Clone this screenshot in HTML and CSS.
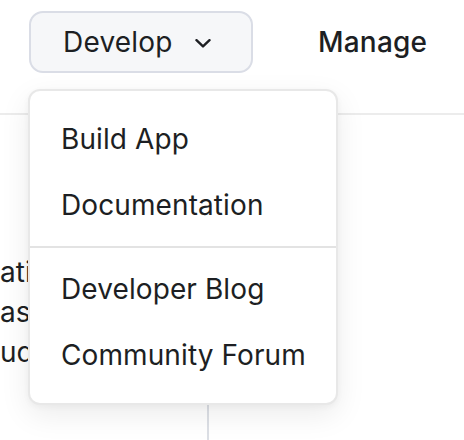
FILE: index.html
```html
<!DOCTYPE html>
<html lang="en">
<head>
<meta charset="utf-8">
<title>Develop menu</title>
<link rel="stylesheet" href="styles.css">
</head>
<body>
<header class="topbar">
  <nav class="nav">
    <div class="nav-item">
      <button class="nav-button is-open" type="button">
        <span>Develop</span>
        <svg class="chevron" width="16" height="9" viewBox="0 0 16 9" aria-hidden="true"><path d="M1.5 1.2 L8 7.4 L14.5 1.2" fill="none" stroke="#1d1f23" stroke-width="2.4" stroke-linecap="round" stroke-linejoin="round"/></svg>
      </button>
      <div class="menu">
        <ul class="menu-group">
          <li class="menu-item">Build App</li>
          <li class="menu-item">Documentation</li>
        </ul>
        <ul class="menu-group">
          <li class="menu-item">Developer Blog</li>
          <li class="menu-item">Community Forum</li>
        </ul>
      </div>
    </div>
    <a class="nav-link" href="#">Manage</a>
  </nav>
</header>
<main class="content">
  <section class="col col-left">
    <p class="copy">ati<br>as<br>ud</p>
  </section>
  <section class="col col-right"></section>
</main>
</body>
</html>
```

FILE: styles.css
```css
* { box-sizing: border-box; }
html, body {
  margin: 0;
  padding: 0;
  background: #ffffff;
  width: 464px;
  height: 440px;
  overflow: hidden;
}
body {
  font-family: "Inter", "Noto Sans", "Liberation Sans", sans-serif;
  color: #1d1f23;
}
.topbar {
  height: 115px;
  border-bottom: 2px solid #ececec;
  padding: 11px 0 0 29px;
}
.nav {
  display: flex;
  align-items: flex-start;
  gap: 65px;
}
.nav-item {
  position: relative;
}
.nav-button {
  display: flex;
  align-items: center;
  gap: 22px;
  height: 62px;
  width: 224px;
  padding: 0 0 0 32px;
  border: 2px solid #dadde6;
  border-radius: 14px;
  background: #f6f7f9;
  font-family: inherit;
  font-size: 28px;
  color: #1d1f23;
  letter-spacing: 0.2px;
  cursor: pointer;
}
.chevron { display: block; margin-top: 2px; }
.nav-link {
  display: block;
  height: 62px;
  line-height: 62px;
  font-size: 28px;
  font-weight: 500;
  color: #1d1f23;
  text-decoration: none;
  letter-spacing: 0.2px;
}
.menu {
  position: absolute;
  top: 78px;
  left: -1px;
  width: 310px;
  background: #ffffff;
  border: 2px solid #e8e8e8;
  border-radius: 12px;
  box-shadow: 0 10px 30px rgba(0, 0, 0, 0.08), 0 2px 6px rgba(0, 0, 0, 0.04);
  z-index: 10;
}
.menu-group {
  list-style: none;
  margin: 0;
  padding: 15px 0 8px;
}
.menu-group + .menu-group {
  border-top: 2px solid #e3e3e3;
  padding: 8px 0 15px;
}
.menu-item {
  height: 66px;
  line-height: 66px;
  padding: 0 31px;
  font-size: 28px;
  color: #1d1f23;
  white-space: nowrap;
  letter-spacing: 0.1px;
}
.content {
  display: grid;
  grid-template-columns: 209px 1fr;
  height: 325px;
}
.col-left {
  border-right: 2px solid #dcdfe5;
  overflow: hidden;
}
.copy {
  margin: 0;
  padding-top: 137px;
  font-size: 28px;
  line-height: 40px;
  color: #1d1f23;
  white-space: nowrap;
}
```
